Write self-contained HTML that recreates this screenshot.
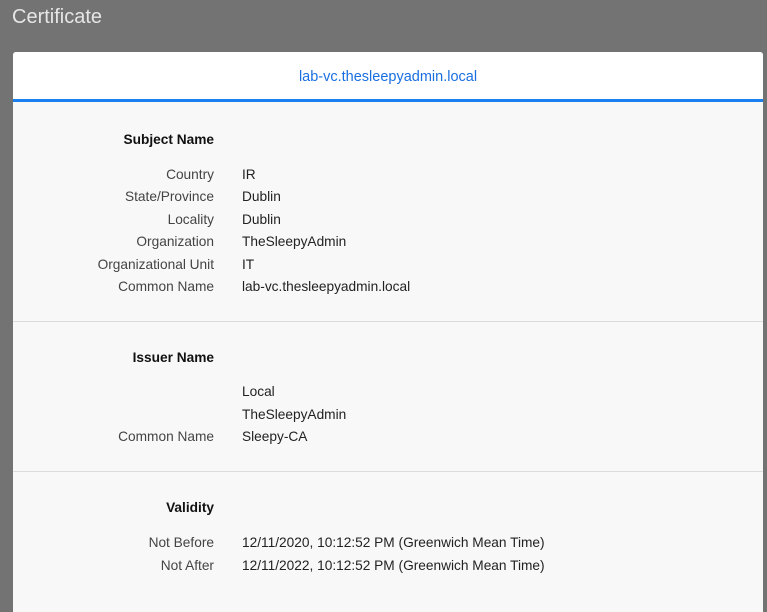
<!DOCTYPE html><html><head><style>
body{margin:0;width:767px;height:588px;background:#737373;font-family:"Liberation Sans",sans-serif;overflow:hidden;position:relative}
.t{position:absolute;left:12px;top:6px;color:#e6e6e6;font-size:20px;font-weight:300}
.card{position:absolute;left:13px;top:52px;width:750px;height:560px;background:#f8f8f9;border-radius:3px 3px 0 0;overflow:hidden}
.hd{height:47px;background:#fff;border-bottom:3px solid #1a7fef;text-align:center;color:#1a6fe0;font-size:14.5px;line-height:50px}
.x{position:absolute;font-size:13.7px;white-space:nowrap}.a{right:553px;text-align:right;color:#444}.b{left:242px;color:#222}.hh{font-weight:bold;color:#111}
</style></head><body>
<div class="t">Certificate</div>
<div class="card"><div class="hd">lab-vc.thesleepyadmin.local</div></div>
<div style="position:absolute;left:13px;top:321px;width:750px;height:1px;background:#dcdcdc"></div>
<div style="position:absolute;left:13px;top:471px;width:750px;height:1px;background:#dcdcdc"></div>
<div style="position:absolute;left:0;top:1px;width:767px">
<div class="x a hh" style="top:131px">Subject Name</div>
<div class="x a" style="top:166px">Country</div><div class="x b" style="top:166px">IR</div>
<div class="x a" style="top:188px">State/Province</div><div class="x b" style="top:188px">Dublin</div>
<div class="x a" style="top:211px">Locality</div><div class="x b" style="top:211px">Dublin</div>
<div class="x a" style="top:233px">Organization</div><div class="x b" style="top:233px">TheSleepyAdmin</div>
<div class="x a" style="top:256px">Organizational Unit</div><div class="x b" style="top:256px">IT</div>
<div class="x a" style="top:278px">Common Name</div><div class="x b" style="top:278px">lab-vc.thesleepyadmin.local</div>
<div class="x a hh" style="top:349px">Issuer Name</div>
<div class="x b" style="top:383px">Local</div>
<div class="x b" style="top:406px">TheSleepyAdmin</div>
<div class="x a" style="top:428px">Common Name</div><div class="x b" style="top:428px">Sleepy-CA</div>
<div class="x a hh" style="top:499px">Validity</div>
<div class="x a" style="top:534px">Not Before</div><div class="x b" style="top:534px">12/11/2020, 10:12:52 PM (Greenwich Mean Time)</div>
<div class="x a" style="top:557px">Not After</div><div class="x b" style="top:557px">12/11/2022, 10:12:52 PM (Greenwich Mean Time)</div>
</div>
</body></html>
